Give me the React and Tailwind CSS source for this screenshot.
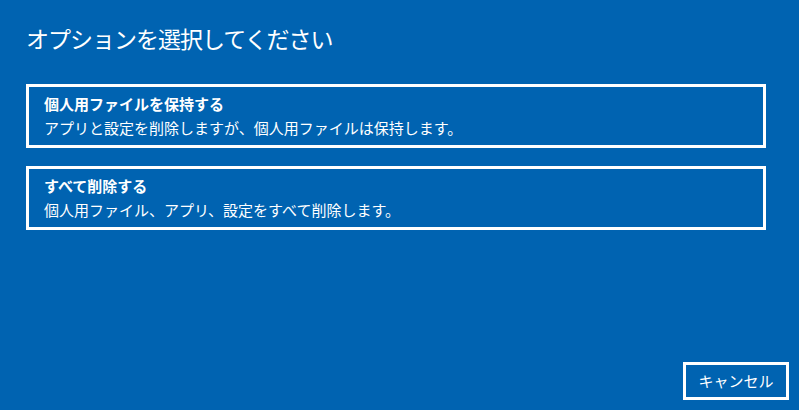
export default function App() {
  const options = [
    {
      titre: "個人用ファイルを保持する",
      description: "アプリと設定を削除しますが、個人用ファイルは保持します。",
    },
    {
      titre: "すべて削除する",
      description: "個人用ファイル、アプリ、設定をすべて削除します。",
    },
  ];

  return (
    <div
      className="relative h-screen w-full bg-[#0063b1] text-white overflow-hidden"
      style={{ fontFamily: '"Noto Sans CJK JP", "Noto Sans", sans-serif' }}
    >
      <div className="pl-[26px] pt-[22px]">
        <h1 className="text-[23px] leading-[32px] font-normal tracking-[-1px]">オプションを選択してください</h1>

        <div className="mt-[30px] flex flex-col gap-[18px]">
          {options.map((opt, index) => (
            <button
              key={index}
              className="w-[740px] border-[3px] border-white px-[15px] py-[5px] text-left"
            >
              <p className="text-[15px] leading-[24px] font-bold">{opt.titre}</p>
              <p className="text-[15px] leading-[24px]">{opt.description}</p>
            </button>
          ))}
        </div>
      </div>

      <button className="absolute right-[10px] bottom-[10px] w-[106px] h-[38px] border-[3px] border-white text-[15px] flex items-center justify-center">
        キャンセル
      </button>
    </div>
  );
}
